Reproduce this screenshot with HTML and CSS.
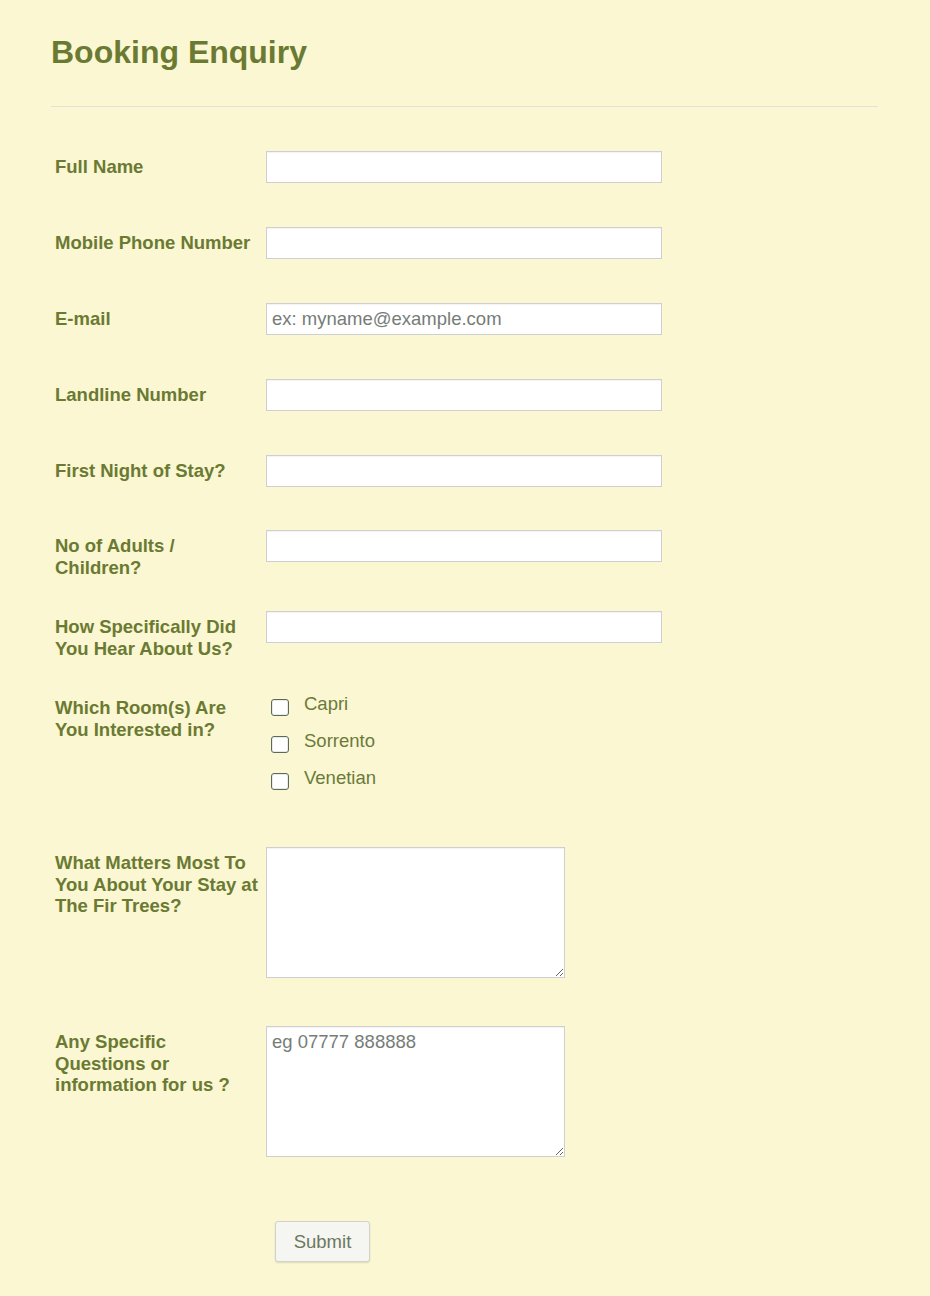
FILE: index.html
```html
<!DOCTYPE html>
<html lang="en">
<head>
<meta charset="utf-8">
<title>Booking Enquiry</title>
<link rel="stylesheet" href="styles.css">
</head>
<body>
<form class="form">
  <div class="header">
    <h1 class="title">Booking Enquiry</h1>
  </div>
  <ul class="fields">
    <li class="row">
      <label class="label">Full Name</label>
      <div class="control"><input class="text" type="text"></div>
    </li>
    <li class="row">
      <label class="label">Mobile Phone Number</label>
      <div class="control"><input class="text" type="text"></div>
    </li>
    <li class="row">
      <label class="label">E-mail</label>
      <div class="control"><input class="text" type="email" placeholder="ex: myname@example.com"></div>
    </li>
    <li class="row">
      <label class="label">Landline Number</label>
      <div class="control"><input class="text" type="text"></div>
    </li>
    <li class="row">
      <label class="label">First Night of Stay?</label>
      <div class="control"><input class="text" type="text"></div>
    </li>
    <li class="row">
      <label class="label">No of Adults /<br>Children?</label>
      <div class="control"><input class="text" type="text"></div>
    </li>
    <li class="row">
      <label class="label">How Specifically Did<br>You Hear About Us?</label>
      <div class="control"><input class="text" type="text"></div>
    </li>
    <li class="row">
      <label class="label">Which Room(s) Are<br>You Interested in?</label>
      <div class="control options">
        <label class="option"><input class="check" type="checkbox"><span class="option-text">Capri</span></label>
        <label class="option"><input class="check" type="checkbox"><span class="option-text">Sorrento</span></label>
        <label class="option"><input class="check" type="checkbox"><span class="option-text">Venetian</span></label>
      </div>
    </li>
    <li class="row">
      <label class="label">What Matters Most To<br>You About Your Stay at<br>The Fir Trees?</label>
      <div class="control control-area"><textarea class="area"></textarea></div>
    </li>
    <li class="row">
      <label class="label">Any Specific<br>Questions or<br>information for us ?</label>
      <div class="control control-area"><textarea class="area" placeholder="eg 07777 888888"></textarea></div>
    </li>
    <li class="row row-submit">
      <div class="submit-wrap"><button class="submit" type="button">Submit</button></div>
    </li>
  </ul>
</form>
</body>
</html>
```
FILE: styles.css
```css
html, body {
  margin: 0;
  padding: 0;
  background: #faf7d2;
}
body {
  font-family: "Liberation Sans", Arial, sans-serif;
  color: #6b7a33;
  min-height: 1296px;
}
.form {
  margin-left: 51px;
  width: 827px;
}
.header {
  padding: 33px 0 35px;
  border-bottom: 1px solid #e2e1d4;
}
.title {
  margin: 0;
  font-size: 32px;
  line-height: 1.2;
  font-weight: bold;
  color: #6b7a33;
}
.fields {
  list-style: none;
  margin: 0;
  padding: 44px 0 0;
}
.row {
  display: flex;
  align-items: flex-start;
  margin-bottom: 33px;
}
.label {
  box-sizing: border-box;
  width: 215px;
  flex: none;
  padding: 5px 4px 0;
  font-size: 18.5px;
  line-height: 21.5px;
  font-weight: bold;
  color: #6b7a33;
}
.control {
  padding-bottom: 10.8px;
}
.control-area {
  padding-bottom: 15px;
}
.text {
  display: block;
  box-sizing: border-box;
  width: 396px;
  height: 32px;
  margin: 0;
  padding: 0 5px;
  border: 1px solid #cfcfcf;
  background: #fff;
  box-shadow: inset 0 1px 1px rgba(0, 0, 0, 0.05);
  font-family: "Liberation Sans", Arial, sans-serif;
  font-size: 18.5px;
  color: #555;
  outline: none;
}
.text::placeholder,
.area::placeholder {
  color: #767c78;
  opacity: 1;
}
.area {
  display: block;
  box-sizing: border-box;
  width: 299px;
  height: 131px;
  margin: 0;
  padding: 4px 5px;
  border: 1px solid #cfcfcf;
  background: #fff;
  box-shadow: inset 0 1px 1px rgba(0, 0, 0, 0.05);
  font-family: "Liberation Sans", Arial, sans-serif;
  font-size: 18.5px;
  line-height: 21.5px;
  color: #555;
  outline: none;
}
.options {
  display: flex;
  flex-direction: column;
}
.option {
  display: flex;
  align-items: flex-start;
  height: 37px;
  box-sizing: border-box;
  padding-top: 1px;
}
.check {
  appearance: none;
  -webkit-appearance: none;
  box-sizing: border-box;
  width: 18px;
  height: 17px;
  margin: 5.5px 0 0 5px;
  border: 1px solid #5c6a5d;
  border-radius: 3px;
  background: #fff;
  box-shadow: inset 0 0 0 1px #e8ece6;
}
.option-text {
  margin-left: 15px;
  font-size: 18.5px;
  line-height: 21.5px;
  color: #6b7a3b;
}
.row-submit {
  padding-top: 16px;
}
.submit-wrap {
  padding-left: 224px;
}
.submit {
  box-sizing: border-box;
  width: 95px;
  height: 41px;
  padding: 0;
  border: 1px solid #d2d2cc;
  border-radius: 3px;
  background: #f5f5f2;
  box-shadow: 0 1px 2px rgba(0, 0, 0, 0.12);
  font-family: "Liberation Sans", Arial, sans-serif;
  font-size: 18.5px;
  color: #6a7860;
}
```
